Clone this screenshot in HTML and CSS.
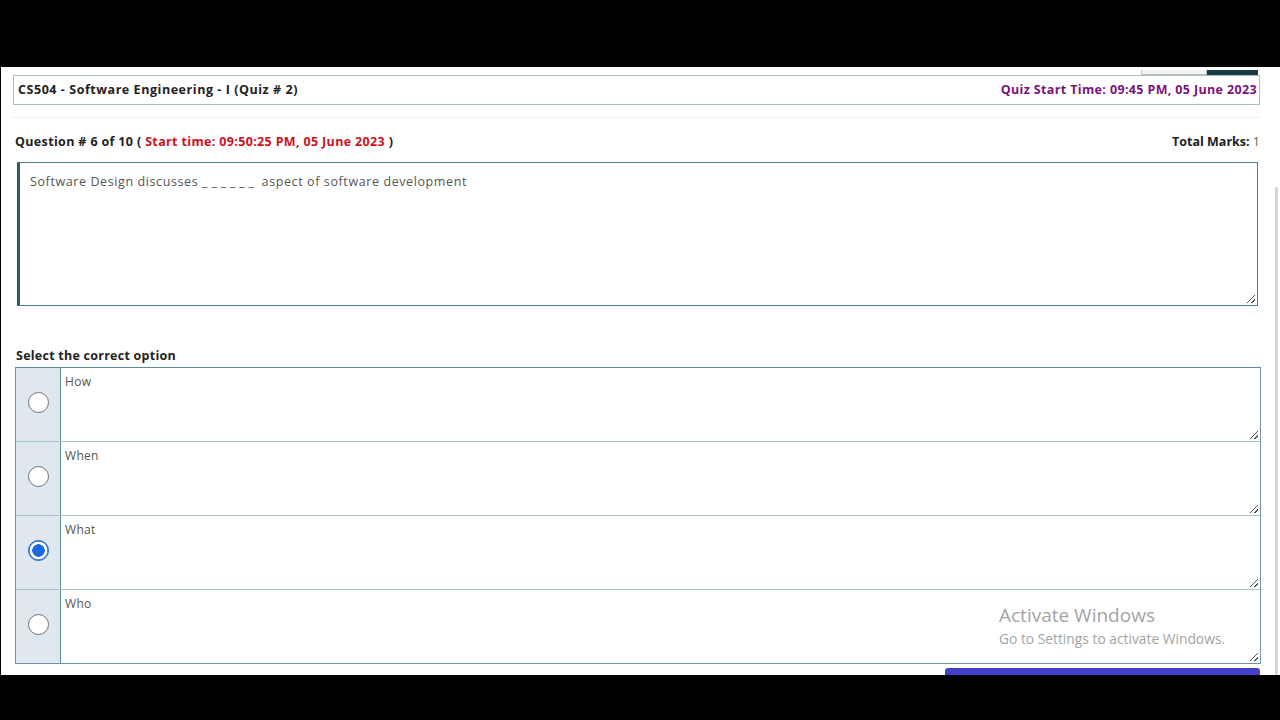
FILE: index.html
```html
<!DOCTYPE html>
<html>
<head>
<meta charset="utf-8">
<link rel="stylesheet" href="styles.css">
</head>
<body>
<div class="screen">
  <div class="topbar"></div>
  <div class="page">
    <div class="tabs">
      <div class="tab-light"></div>
      <div class="tab-dark"></div>
    </div>
    <div class="header">
      <span class="course">CS504 - Software Engineering - I (Quiz # 2)</span>
      <span class="quiz-start">Quiz Start Time: 09:45 PM, 05 June 2023</span>
    </div>
    <div class="divider"></div>
    <div class="qrow">
      <span class="qnum">Question # 6 of 10 ( <span class="qtime">Start time: 09:50:25 PM, 05 June 2023</span> )</span>
      <span class="marks">Total Marks: <span class="mark-val">1</span></span>
    </div>
    <div class="qbox">
      <span class="qtext">Software Design discusses <span class="blank">______</span> aspect of software development</span>
      <span class="grip"></span>
    </div>
    <div class="select-label">Select the correct option</div>
    <div class="options">
      <div class="opt">
        <div class="opt-radio"><span class="radio"></span></div>
        <div class="opt-text">How<span class="grip"></span></div>
      </div>
      <div class="opt">
        <div class="opt-radio"><span class="radio"></span></div>
        <div class="opt-text">When<span class="grip"></span></div>
      </div>
      <div class="opt">
        <div class="opt-radio"><span class="radio checked"></span></div>
        <div class="opt-text">What<span class="grip"></span></div>
      </div>
      <div class="opt">
        <div class="opt-radio"><span class="radio"></span></div>
        <div class="opt-text">Who<span class="grip"></span></div>
      </div>
    </div>
    <div class="btnrow"><div class="btn"></div></div>
    <div class="scroll"></div>
    <div class="activate">
      <div class="act-title">Activate Windows</div>
      <div class="act-sub">Go to Settings to activate Windows.</div>
    </div>
  </div>
  <div class="bottombar"></div>
</div>
</body>
</html>
```

FILE: styles.css
```css
* { box-sizing: border-box; }
html, body { margin: 0; padding: 0; }
body {
  background: #000;
  font-family: "Open Sans", "Noto Sans", sans-serif;
  color: #222;
  width: 1280px;
  height: 720px;
  overflow: hidden;
}
.screen { display: flex; flex-direction: column; height: 720px; }
.topbar { height: 67px; background: #000; }
.bottombar { flex: 1; background: #000; }
.page {
  position: relative;
  height: 608px;
  background: #fff;
  margin-left: 1px;
  overflow: hidden;
}
.tabs {
  display: flex;
  justify-content: flex-end;
  height: 8px;
  padding-right: 22px;
}
.tab-light {
  width: 66px;
  height: 5px;
  margin-top: 3px;
  border: 1px solid #b9c0c2;
  border-top: none;
  background: #f4f4f4;
}
.tab-dark {
  width: 51px;
  height: 5px;
  margin-top: 3px;
  background: #173c44;
}
.header {
  margin: 0 20px 0 12px;
  height: 30px;
  border: 1px solid #a9bcbf;
  display: flex;
  align-items: center;
  justify-content: space-between;
  padding: 0 2px 1px 4px;
  font-weight: 700;
  font-size: 12.5px;
}
.course { color: #222; letter-spacing: 0.55px; }
.quiz-start { color: #7a137a; letter-spacing: 0.36px; }
.divider {
  height: 1px;
  margin: 12px 20px 0 12px;
  background: #eef1f2;
}
.qrow {
  display: flex;
  justify-content: space-between;
  align-items: center;
  margin: 15px 20px 0 14px;
  height: 16px;
  font-weight: 700;
  font-size: 12.5px;
}
.qnum { letter-spacing: 0.35px; }
.qtime { color: #d0101c; }
.marks { color: #222; }
.mark-val { font-weight: 400; color: #666; }
.qbox {
  position: relative;
  margin: 13px 22px 0 16px;
  height: 144px;
  border: 1px solid #4f7f8c;
  border-left: 3px solid #2b5c69;
  padding: 8px 10px;
  line-height: 18px;
}
.qtext { font-size: 12.5px; color: #555; letter-spacing: 0.6px; }
.blank { letter-spacing: 3.8px; }
.grip {
  position: absolute;
  right: 2px;
  bottom: 2px;
  width: 8px;
  height: 8px;
  background:
    linear-gradient(135deg, transparent 45%, #555 45%, #555 55%, transparent 55%),
    linear-gradient(135deg, transparent 72%, #555 72%, #555 82%, transparent 82%);
}
.select-label {
  margin: 41px 0 0 15px;
  font-weight: 700;
  font-size: 12.5px;
  height: 17px;
  line-height: 17px;
  letter-spacing: 0.25px;
}
.options {
  margin: 3px 19px 0 14px;
  border: 1px solid #6e97a3;
  border-top-color: #5d8793;
}
.opt {
  display: flex;
  height: 74px;
  border-top: 1px solid #a8c2c9;
}
.opt:first-child { border-top: none; height: 73px; }
.opt:last-child { height: 74px; }
.opt-radio {
  width: 45px;
  background: #dfe7ef;
  border-right: 1px solid #5f8896;
  display: flex;
  align-items: center;
  justify-content: center;
  padding-bottom: 5px;
}
.radio {
  width: 21px;
  height: 21px;
  border-radius: 50%;
  border: 1px solid #707070;
  background: #fff;
}
.radio.checked {
  border: 1px solid #1a5fd6;
  background: radial-gradient(circle, #1a6ae0 0 6px, #fff 6.5px 8.5px, #6a8fc8 9px);
}
.opt-text {
  position: relative;
  flex: 1;
  padding: 5px 4px;
  font-size: 12px;
  color: #555;
  letter-spacing: 0.3px;
}
.btnrow {
  display: flex;
  justify-content: flex-end;
  margin: 4px 20px 0 0;
}
.btn {
  width: 315px;
  height: 20px;
  background: #4340c9;
  border-radius: 3px 3px 0 0;
}
.scroll {
  position: absolute;
  right: 2px;
  top: 120px;
  width: 3px;
  bottom: 0;
  background: #d6d6d6;
}
.activate {
  position: absolute;
  left: 998px;
  top: 536px;
  font-family: "Open Sans", "Noto Sans", sans-serif;
  color: #a4a4a4;
}
.act-title { font-size: 19px; line-height: 24px; }
.act-sub { font-size: 13.8px; line-height: 24px; }
```
